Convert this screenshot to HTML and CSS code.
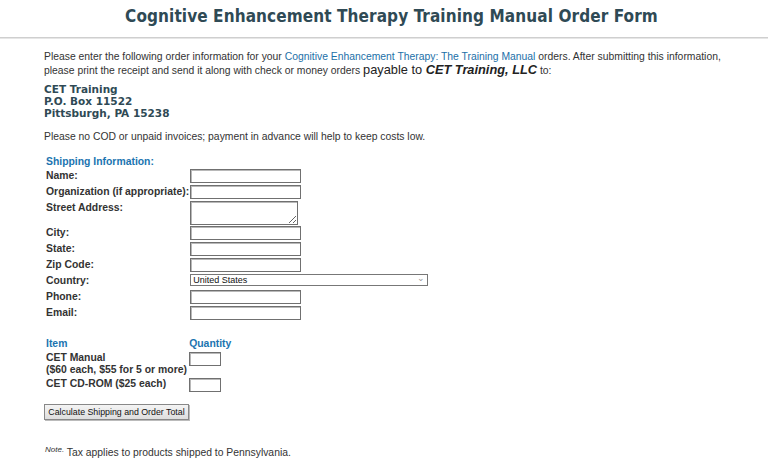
FILE: index.html
```html
<!DOCTYPE html>
<html>
<head>
<meta charset="utf-8">
<link rel="stylesheet" href="styles.css">
</head>
<body>
<h1 class="title">Cognitive Enhancement Therapy Training Manual Order Form</h1>
<div class="rule"></div>
<div class="content">
  <p class="intro">Please enter the following order information for your <a class="link" href="#">Cognitive Enhancement Therapy: The Training Manual</a> orders. After submitting this information, please print the receipt and send it along with check or money orders <span class="payable">payable to <em class="payee">CET Training, LLC</em></span> to:</p>
  <div class="address">CET Training<br>P.O. Box 11522<br>Pittsburgh, PA 15238</div>
  <p class="notice">Please no COD or unpaid invoices; payment in advance will help to keep costs low.</p>
  <table class="form">
    <tr><td class="head" colspan="2">Shipping Information:</td></tr>
    <tr><td class="lbl">Name:</td><td class="fld"><input class="txt" type="text"></td></tr>
    <tr><td class="lbl">Organization (if appropriate):</td><td class="fld"><input class="txt" type="text"></td></tr>
    <tr><td class="lbl">Street Address:</td><td class="fld"><textarea class="area"></textarea></td></tr>
    <tr><td class="lbl">City:</td><td class="fld"><input class="txt" type="text"></td></tr>
    <tr><td class="lbl">State:</td><td class="fld"><input class="txt" type="text"></td></tr>
    <tr><td class="lbl">Zip Code:</td><td class="fld"><input class="txt" type="text"></td></tr>
    <tr><td class="lbl">Country:</td><td class="fld"><div class="select">United States<span class="caret">&#8964;</span></div></td></tr>
    <tr><td class="lbl">Phone:</td><td class="fld"><input class="txt" type="text"></td></tr>
    <tr><td class="lbl">Email:</td><td class="fld"><input class="txt" type="text"></td></tr>
    <tr class="spacer"><td colspan="2"></td></tr>
    <tr><td class="head">Item</td><td class="head qhead">Quantity</td></tr>
    <tr><td class="lbl">CET Manual<br>($60 each, $55 for 5 or more)</td><td class="qcell"><input class="qty" type="text"></td></tr>
    <tr><td class="lbl">CET CD-ROM ($25 each)</td><td class="qcell"><input class="qty" type="text"></td></tr>
  </table>
  <button class="calc" type="button">Calculate Shipping and Order Total</button>
  <p class="note"><span class="note-tag">Note.</span> Tax applies to products shipped to Pennsylvania.</p>
</div>
</body>
</html>
```
FILE: styles.css
```css
html, body { margin: 0; padding: 0; background: #fff; }
body { font-family: "Liberation Sans", Arial, sans-serif; color: #333; }
.title {
  margin: 0;
  padding: 6px 0 0 15px;
  height: 31px;
  text-align: center;
  font-family: "DejaVu Sans Condensed", "DejaVu Sans", sans-serif;
  font-weight: bold;
  font-size: 17px;
  line-height: 20px;
  color: #2f4a55;
  letter-spacing: 0.1px;
}
.rule { height: 1px; background: #cfcfcf; border-bottom: 1px solid #e6e6e6; }
.content { padding: 0 44px; }
.intro { margin: 11px 0 0; font-size: 10.37px; line-height: 14px; }
.link { color: #1b6fa8; text-decoration: none; }
.payable { font-size: 12.8px; line-height: 1; color: #222; }
.payee { font-weight: bold; font-style: italic; }
.address {
  margin-top: 5px;
  font-family: "DejaVu Sans", Verdana, sans-serif;
  font-weight: bold;
  font-size: 10.5px;
  line-height: 12px;
  color: #2f4a55;
}
.notice { margin: 11px 0 0; font-size: 10.37px; line-height: 14px; }
.form { border-collapse: collapse; margin-top: 9px; margin-left: 0; }
.form td { padding: 0; vertical-align: top; font-size: 10.4px; font-weight: bold; line-height: 12px; }
.form .head { color: #1b74b0; padding: 3px 0 0 2px; height: 12px; }
.form .lbl { color: #333; padding: 2px 0 0 2px; }
.form .fld { padding-left: 1px; }
.txt {
  display: block; box-sizing: border-box;
  width: 111px; height: 14px; margin: 1px 0 1px;
  border: 1px solid #707070; box-shadow: inset 1px 1px 0 #b8b8b8;
  padding: 0; background: #fff;
}
.area {
  display: block; box-sizing: border-box;
  width: 108px; height: 24px; margin: 1px 0 0;
  border: 1px solid #707070; box-shadow: inset 1px 1px 0 #b8b8b8;
  padding: 0; resize: both;
}
.select {
  position: relative; box-sizing: border-box;
  width: 238px; height: 12px; margin: 1px 0 3px;
  border: 1px solid #777; font-weight: normal; font-size: 9px; line-height: 10px;
  padding-left: 2px; color: #111; background: #fff;
}
.caret { position: absolute; right: 2px; top: -2px; color: #999; font-size: 9px; }
.spacer td { height: 14px; }
.form .qhead { padding-left: 0; }
.qcell { padding-left: 0; }
.qty {
  display: block; box-sizing: border-box;
  width: 32px; height: 14px; margin: 2px 0 2px;
  border: 1px solid #707070; box-shadow: inset 1px 1px 0 #b8b8b8; padding: 0;
}
.calc {
  display: block; margin-top: 10px;
  width: 145px; height: 16px; padding: 0;
  font-family: "Liberation Sans", Arial, sans-serif; font-size: 8.8px; color: #111;
  background: linear-gradient(#f4f4f4, #dedede);
  border: 1px solid #888; box-shadow: 1px 1px 0 #bbb;
}
.note { margin: 25px 0 0 1px; font-size: 10.37px; color: #333; }
.note-tag { font-size: 8px; font-style: italic; vertical-align: 4px; }
```
